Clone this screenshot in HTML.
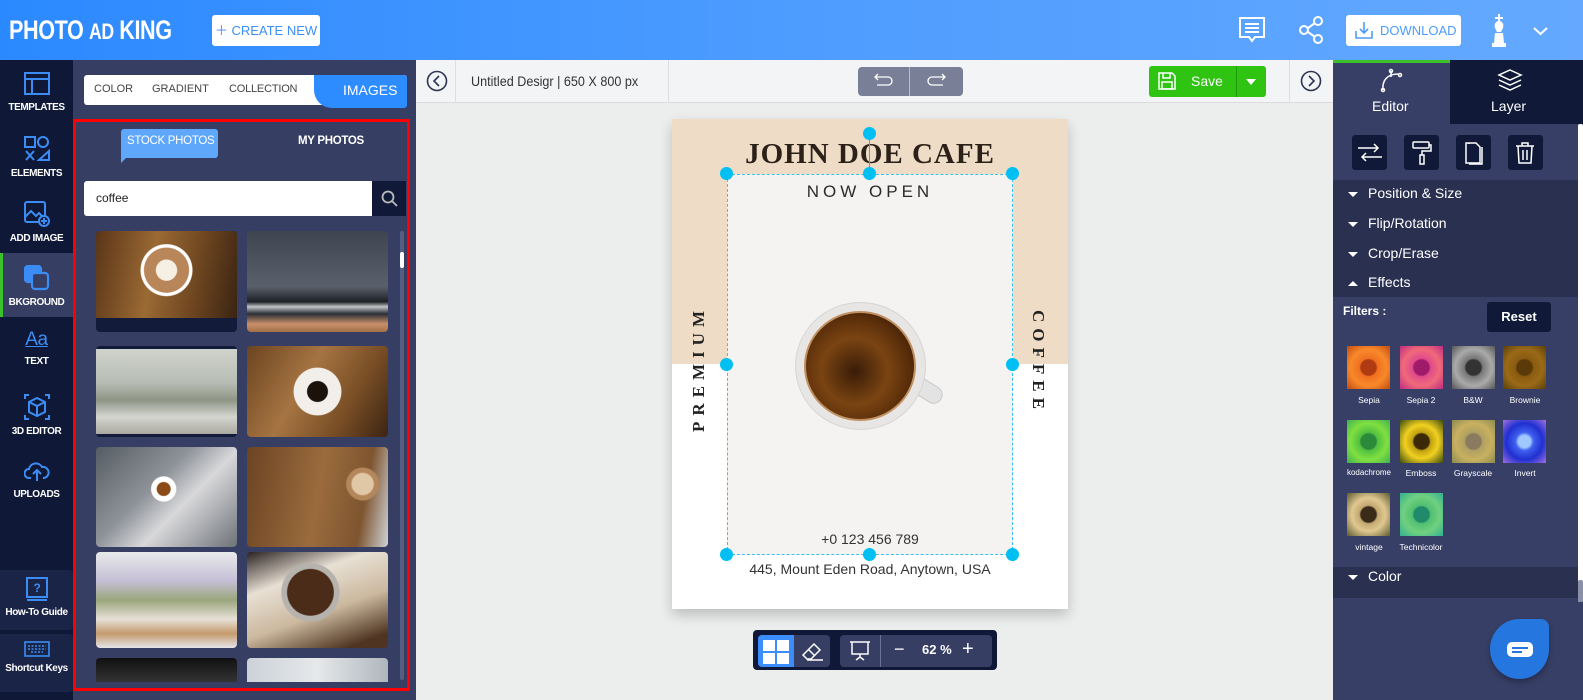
<!DOCTYPE html>
<html><head><meta charset="utf-8"><style>
*{box-sizing:border-box;margin:0;padding:0}
body{width:1583px;height:700px;overflow:hidden;font-family:"Liberation Sans",sans-serif;background:#eceeee;position:relative}
.abs{position:absolute}
#hdr{left:0;top:0;width:1583px;height:60px;background:linear-gradient(90deg,#2b89ff,#4d9cff 50%,#64a9ff)}
#nav{left:0;top:60px;width:73px;height:640px;background:#0f1937}
.ni{position:absolute;left:0;width:73px;text-align:center;color:#fff;font-size:10px;font-weight:bold;letter-spacing:-0.4px}
.ni svg{display:block;margin:0 auto 6px}
#panel{left:73px;top:60px;width:343px;height:640px;background:#363e63}
#red{left:73px;top:119px;width:337px;height:572px;border:3px solid #f00}
.th{position:absolute;width:141px;border-radius:4px}
#center{left:416px;top:60px;width:917px;height:640px;background:#eceeee}
#tb{left:416px;top:60px;width:917px;height:43px;background:#f2f4f5;border-bottom:1px solid #dcdcdc}
#right{left:1333px;top:60px;width:250px;height:640px;background:#373f66}
.acc{position:absolute;left:1348px;color:#fff;font-size:14px}
.acc:before{content:"";display:inline-block;border-left:5px solid transparent;border-right:5px solid transparent;border-top:5px solid #fff;margin-right:10px;vertical-align:middle}
.acc.up:before{border-top:0;border-bottom:5px solid #fff}
.fl{position:absolute;width:43px;height:43px}
.fll{position:absolute;width:60px;text-align:center;color:#fff;font-size:8.5px}
.h{position:absolute;width:13px;height:13px;border-radius:50%;background:#00bff3}
</style></head><body>
<div id="hdr" class="abs"></div>
<div class="abs" style="left:9px;top:15px;color:#fff;font-size:27px;font-weight:bold;letter-spacing:-0.5px;white-space:nowrap;transform:scaleX(0.8);transform-origin:0 0">PHOTO <span style="font-size:22px">AD</span> KING</div>
<div class="abs" style="left:212px;top:15px;width:108px;height:31px;background:#fff;border-radius:3px;color:#3e8ff5;font-size:13px;line-height:31px;text-align:center">＋ CREATE NEW</div>
<svg class="abs" style="left:1238px;top:16px" width="28" height="28" viewBox="0 0 28 28" fill="none" stroke="#fff" stroke-width="2"><path d="M2 2h24v19H17l-3 4-3-4H2z"/><path d="M7 8h14M7 12h14M7 16h14"/></svg>
<svg class="abs" style="left:1298px;top:16px" width="28" height="28" viewBox="0 0 28 28" fill="none" stroke="#fff" stroke-width="2"><circle cx="20" cy="5" r="4"/><circle cx="6" cy="14" r="4"/><circle cx="20" cy="23" r="4"/><path d="M10 12l7-5M10 16l7 5"/></svg>
<div class="abs" style="left:1346px;top:15px;width:115px;height:31px;background:#fff;border-radius:3px;color:#4d9cfb;font-size:13px;line-height:31px;padding-left:34px">DOWNLOAD</div>
<svg class="abs" style="left:1354px;top:20px" width="20" height="20" viewBox="0 0 20 20" fill="none" stroke="#4d9cfb" stroke-width="1.6"><path d="M2 11v7h16v-7M10 2v11M6 9l4 4 4-4"/></svg>
<svg class="abs" style="left:1490px;top:14px" width="18" height="34" viewBox="0 0 18 34" fill="#fff"><path d="M8 0h2v3h3v2h-3v2c3 1 4 4 3 7l-2 4h-4l-2-4c-1-3 0-6 3-7V5H5V3h3z"/><path d="M5 19h8l1 10h-10z"/><rect x="2" y="29" width="14" height="4"/></svg>
<svg class="abs" style="left:1533px;top:26px" width="15" height="10" viewBox="0 0 15 10" fill="none" stroke="#fff" stroke-width="2"><path d="M1 2l6.5 6 6.5-6"/></svg>

<div id="nav" class="abs"></div>
<div class="ni" style="top:72px"><svg width="26" height="24" viewBox="0 0 26 24" fill="none" stroke="#3b8df5" stroke-width="2"><rect x="1" y="1" width="24" height="21"/><path d="M1 7h24M8 7v15"/></svg>TEMPLATES</div>
<div class="ni" style="top:136px"><svg width="26" height="26" viewBox="0 0 26 26" fill="none" stroke="#3b8df5" stroke-width="2"><rect x="1" y="1" width="10" height="10"/><circle cx="19" cy="6" r="5"/><path d="M2 15l8 9M10 15l-8 9M15 24h10V15z"/></svg>ELEMENTS</div>
<div class="ni" style="top:201px"><svg width="26" height="26" viewBox="0 0 26 26" fill="none" stroke="#3b8df5" stroke-width="2"><rect x="1" y="1" width="20" height="20" rx="2"/><path d="M1 16l6-6 5 5 3-3 6 6"/><circle cx="20" cy="20" r="5" fill="#0f1937"/><path d="M20 17v6M17 20h6"/></svg>ADD IMAGE</div>
<div class="abs" style="left:0;top:253px;width:73px;height:64px;background:#363e63;border-left:3px solid #3ac12b"></div>
<div class="ni" style="top:265px"><svg width="26" height="26" viewBox="0 0 26 26" fill="none" stroke="#3b8df5" stroke-width="2.2"><rect x="1" y="1" width="16" height="16" rx="3" fill="#3b8df5"/><rect x="8" y="8" width="16" height="16" rx="3" fill="#363e63"/></svg>BKGROUND</div>
<div class="ni" style="top:330px"><div style="color:#3b8df5;font-size:19px;font-weight:normal;line-height:20px;text-decoration:underline">Aa</div><div style="height:6px"></div>TEXT</div>
<div class="ni" style="top:394px"><svg width="26" height="26" viewBox="0 0 26 26" fill="none" stroke="#3b8df5" stroke-width="2"><path d="M13 4l8 4v10l-8 4-8-4V8zM5 8l8 4 8-4M13 12v10"/><path d="M1 5V1h4M21 1h4v4M25 21v4h-4M5 25H1v-4"/></svg>3D EDITOR</div>
<div class="ni" style="top:459px"><svg width="26" height="24" viewBox="0 0 26 24" fill="none" stroke="#3b8df5" stroke-width="2"><path d="M7 19H5a4 4 0 010-9 7 7 0 0113-2 5 5 0 012 11h-1"/><path d="M13 22v-10M9 15l4-4 4 4"/></svg>UPLOADS</div>
<div class="abs" style="left:0;top:570px;width:73px;height:60px;background:#1a2447;border-radius:0 4px 4px 0"></div>
<div class="ni" style="top:577px"><svg width="22" height="24" viewBox="0 0 22 24" fill="none" stroke="#3b8df5" stroke-width="2"><rect x="1" y="1" width="20" height="19"/><path d="M1 23h20"/><text x="11" y="15" font-size="12" fill="#3b8df5" stroke="none" text-anchor="middle" font-family="Liberation Sans">?</text></svg>How-To Guide</div>
<div class="abs" style="left:0;top:634px;width:73px;height:58px;background:#1a2447;border-radius:0 4px 4px 0"></div>
<div class="ni" style="top:641px"><svg width="26" height="16" viewBox="0 0 26 16" fill="none" stroke="#3b8df5" stroke-width="1.6"><rect x="1" y="1" width="24" height="14"/><path d="M4 5h18M4 8h18M7 11h12" stroke-dasharray="2 1.5"/></svg>Shortcut Keys</div>

<div id="panel" class="abs"></div>
<div class="abs" style="left:84px;top:75px;width:323px;height:30px;background:#fff;border-radius:3px"></div>
<div class="abs" style="left:314px;top:75px;width:93px;height:33px;background:#2d8cff;border-radius:0 3px 3px 18px"></div>
<div class="abs" style="left:94px;top:83px;font-size:11px;color:#444">COLOR</div>
<div class="abs" style="left:152px;top:83px;font-size:11px;color:#444">GRADIENT</div>
<div class="abs" style="left:229px;top:83px;font-size:11px;color:#444;letter-spacing:-0.2px">COLLECTION</div>
<div class="abs" style="left:343px;top:82px;font-size:14px;color:#fff">IMAGES</div>
<div id="red" class="abs"></div>
<div class="abs" style="left:121px;top:129px;width:97px;height:29px;background:#5ea7fb;border-radius:3px"></div>
<div class="abs" style="left:121px;top:155px;border-top:8px solid #5ea7fb;border-right:8px solid transparent"></div>
<div class="abs" style="left:127px;top:135px;font-size:11.5px;color:#fff;letter-spacing:-0.3px">STOCK PHOTOS</div>
<div class="abs" style="left:298px;top:135px;font-size:11.5px;color:#fff;font-weight:bold;letter-spacing:-0.3px">MY PHOTOS</div>
<div class="abs" style="left:84px;top:181px;width:288px;height:35px;background:#fff;border-radius:3px 0 0 3px;font-size:12px;line-height:35px;padding-left:12px;color:#222">coffee</div>
<div class="abs" style="left:372px;top:181px;width:34px;height:35px;background:#101a38"></div>
<svg class="abs" style="left:381px;top:190px" width="17" height="17" viewBox="0 0 17 17" fill="none" stroke="#bbb" stroke-width="1.8"><circle cx="7" cy="7" r="5.5"/><path d="M11 11l5 5"/></svg>
<div class="th" style="left:96px;top:231px;height:101px;background:#121b3a"><div style="height:87px;border-radius:4px 4px 0 0;background:radial-gradient(circle at 50% 45%,#f6f0e4 0 12%,#b9865a 13% 26%,#fff 27% 30%,transparent 31%),linear-gradient(100deg,#5a3518,#9b6a34 40%,#6e4620 70%,#3a2412)"></div></div>
<div class="th" style="left:247px;top:231px;height:101px;background:linear-gradient(180deg,#3e4550,#59606b 55%,#1d2026 70%,#bfc3c6 75%,#2a2e36 82%,#c8906a 92%,#a3704a)"></div>
<div class="th" style="left:96px;top:346px;height:91px;background:#121b3a"><div style="height:85px;margin-top:3px;background:linear-gradient(180deg,#cfd3cc,#b7bcb4 40%,#8e9585 60%,#d4d5d0 80%,#aaa9a0)"></div></div>
<div class="th" style="left:247px;top:346px;height:91px;background:radial-gradient(circle at 50% 50%,#1b120c 0 12%,#f2efea 13% 28%,transparent 29%),linear-gradient(120deg,#6b4420,#a67442 40%,#7a4f26 70%,#3b2412)"></div>
<div class="th" style="left:96px;top:447px;height:100px;background:radial-gradient(circle at 48% 42%,#8b4a17 0 7%,#fff 8% 13%,transparent 14%),linear-gradient(135deg,#555c63,#8e9399 40%,#d8d8da 60%,#6d7278)"></div>
<div class="th" style="left:247px;top:447px;height:100px;background:radial-gradient(circle at 82% 37%,#e0c7a6 0 8%,#b4875b 9% 12%,transparent 13%),linear-gradient(100deg,#6b4423,#9b6b3d 50%,#7e5530 80%,#cfd2d5)"></div>
<div class="th" style="left:96px;top:552px;height:96px;background:linear-gradient(180deg,#e8eaeb,#c5bfd6 30%,#9aa67c 50%,#e6e0d6 70%,#c49a6c 85%,#e4e6ea)"></div>
<div class="th" style="left:247px;top:552px;height:96px;background:radial-gradient(circle at 45% 42%,#4a2c18 0 24%,#b6b3ae 25% 30%,transparent 31%),linear-gradient(160deg,#2a2220,#e8e0d4 30%,#cbb89e 60%,#4e3421 90%)"></div>
<div class="th" style="left:96px;top:658px;height:24px;background:linear-gradient(180deg,#111,#333);border-radius:4px 4px 0 0"></div>
<div class="th" style="left:247px;top:658px;height:24px;background:linear-gradient(90deg,#ccd2d8,#e6e8ea,#aeb6bd);border-radius:4px 4px 0 0"></div>
<div class="abs" style="left:400px;top:231px;width:4px;height:449px;background:#545d82;border-radius:2px"></div>
<div class="abs" style="left:400px;top:252px;width:4px;height:16px;background:#fff;border-radius:2px"></div>

<div id="center" class="abs"></div>
<div id="tb" class="abs"></div>
<div class="abs" style="left:455px;top:60px;width:1px;height:43px;background:#dcdfe0"></div>
<div class="abs" style="left:668px;top:60px;width:1px;height:43px;background:#dcdfe0"></div>
<div class="abs" style="left:1289px;top:60px;width:1px;height:43px;background:#dcdfe0"></div>
<svg class="abs" style="left:426px;top:70px" width="22" height="22" viewBox="0 0 22 22" fill="none" stroke="#2c3452" stroke-width="1.6"><circle cx="11" cy="11" r="9.5"/><path d="M13 6l-5 5 5 5"/></svg>
<svg class="abs" style="left:1300px;top:70px" width="22" height="22" viewBox="0 0 22 22" fill="none" stroke="#2c3452" stroke-width="1.6"><circle cx="11" cy="11" r="9.5"/><path d="M9 6l5 5-5 5"/></svg>
<div class="abs" style="left:471px;top:73px;font-size:14px;color:#333;transform:scaleX(0.9);transform-origin:0 0;white-space:nowrap">Untitled Desigr | 650 X 800 px</div>
<div class="abs" style="left:858px;top:67px;width:105px;height:29px;background:#787f97;border-radius:4px"></div>
<div class="abs" style="left:909px;top:67px;width:1px;height:29px;background:#b9bdc8"></div>
<svg class="abs" style="left:873px;top:72px" width="22" height="18" viewBox="0 0 22 18" fill="none" stroke="#fff" stroke-width="1.3"><path d="M5 2L2 5l3 3M2 5h13a4 4 0 010 8H4"/></svg>
<svg class="abs" style="left:925px;top:72px" width="22" height="18" viewBox="0 0 22 18" fill="none" stroke="#fff" stroke-width="1.3"><path d="M17 2l3 3-3 3M20 5H7a4 4 0 000 8h11"/></svg>
<div class="abs" style="left:1149px;top:66px;width:117px;height:31px;background:#2ec411;border-radius:3px"></div>
<div class="abs" style="left:1236px;top:66px;width:1px;height:31px;background:#1f9a08"></div>
<svg class="abs" style="left:1157px;top:71px" width="20" height="20" viewBox="0 0 20 20" fill="none" stroke="#fff" stroke-width="1.5"><path d="M2 2h13l3 3v13H2z"/><path d="M6 2v5h7V2M5 11h10v7H5z"/></svg>
<div class="abs" style="left:1191px;top:73px;font-size:14px;color:#fff">Save</div>
<div class="abs" style="left:1246px;top:79px;border-left:5px solid transparent;border-right:5px solid transparent;border-top:6px solid #fff"></div>

<div class="abs" style="left:672px;top:119px;width:396px;height:490px;background:#fff;box-shadow:0 6px 12px rgba(0,0,0,.2)"></div>
<div class="abs" style="left:672px;top:119px;width:396px;height:245px;background:#eedcc7"></div>
<div class="abs" style="left:727px;top:174px;width:286px;height:381px;background:#f4f3f1;border:1px dashed #38c3ef"></div>
<div class="abs" style="left:672px;top:138px;width:396px;text-align:center;font-family:'Liberation Serif',serif;font-weight:bold;font-size:29px;color:#2b2118;letter-spacing:1px">JOHN DOE CAFE</div>
<div class="abs" style="left:672px;top:182px;width:396px;text-align:center;font-size:17px;color:#2b2b2b;letter-spacing:4px">NOW OPEN</div>
<div class="abs" style="left:689px;top:432px;transform:rotate(-90deg);transform-origin:0 0;font-family:'Liberation Serif',serif;font-weight:bold;font-size:17px;letter-spacing:6px;color:#222;white-space:nowrap">PREMIUM</div>
<div class="abs" style="left:1048px;top:310px;transform:rotate(90deg);transform-origin:0 0;font-family:'Liberation Serif',serif;font-weight:bold;font-size:17px;letter-spacing:6px;color:#222;white-space:nowrap">COFFEE</div>
<div class="abs" style="left:672px;top:531px;width:396px;text-align:center;font-size:14px;color:#333">+0 123 456 789</div>
<div class="abs" style="left:672px;top:561px;width:396px;text-align:center;font-size:14px;color:#333">445, Mount Eden Road, Anytown, USA</div>
<div class="abs" style="left:908px;top:381px;width:36px;height:18px;background:#e3e3e3;border-radius:9px;transform:rotate(32deg);border:1px solid #c8c8c8"></div>
<div class="abs" style="left:795px;top:302px;width:131px;height:128px;border-radius:50%;background:#e7e6e4;border:1px solid #d5d5d5"></div>
<div class="abs" style="left:804px;top:311px;width:112px;height:110px;border-radius:50%;background:radial-gradient(circle at 45% 55%,#3a1c08,#7a4412 40%,#5a2e0a 65%,#2a1405 90%);border:2px solid #c09060"></div>
<div class="abs" style="left:869px;top:129px;width:1px;height:45px;background:#00bff3"></div>
<div class="h" style="left:863px;top:127px"></div>
<div class="h" style="left:720px;top:167px"></div><div class="h" style="left:863px;top:167px"></div><div class="h" style="left:1006px;top:167px"></div>
<div class="h" style="left:720px;top:358px"></div><div class="h" style="left:1006px;top:358px"></div>
<div class="h" style="left:720px;top:548px"></div><div class="h" style="left:863px;top:548px"></div><div class="h" style="left:1006px;top:548px"></div>

<div class="abs" style="left:753px;top:630px;width:244px;height:40px;background:#0f1937;border-radius:4px"></div>
<div class="abs" style="left:758px;top:635px;width:72px;height:32px;background:#363e63;border-radius:4px"></div>
<div class="abs" style="left:758px;top:635px;width:36px;height:32px;background:#3c8dfc;border-radius:4px 0 0 4px"></div>
<svg class="abs" style="left:763px;top:640px" width="26" height="24" viewBox="0 0 26 24" fill="#fff"><rect x="0" y="0" width="12" height="11"/><rect x="14" y="0" width="12" height="11"/><rect x="0" y="13" width="12" height="11"/><rect x="14" y="13" width="12" height="11"/></svg>
<svg class="abs" style="left:798px;top:639px" width="28" height="24" viewBox="0 0 28 24" fill="none" stroke="#fff" stroke-width="1.5"><path d="M5 16l11-11 6 6-9 9H9zM10 10l6 6M9 21h16"/></svg>
<div class="abs" style="left:840px;top:635px;width:152px;height:32px;background:#363e63;border-radius:4px"></div>
<div class="abs" style="left:880px;top:635px;width:1px;height:32px;background:#6a7194"></div>
<svg class="abs" style="left:848px;top:640px" width="24" height="22" viewBox="0 0 24 22" fill="none" stroke="#fff" stroke-width="1.5"><path d="M2 2h20M4 2v12h16V2M12 14v4M8 20l4-3 4 3"/></svg>
<div class="abs" style="left:894px;top:639px;font-size:18px;color:#fff">−</div>
<div class="abs" style="left:922px;top:642px;font-size:13px;color:#fff;font-weight:bold">62 %</div>
<div class="abs" style="left:962px;top:638px;font-size:20px;color:#fff">+</div>

<div id="right" class="abs"></div>
<div class="abs" style="left:1333px;top:60px;width:117px;height:3px;background:#3ac12b"></div>
<div class="abs" style="left:1450px;top:60px;width:133px;height:64px;background:#101a38"></div>
<svg class="abs" style="left:1378px;top:68px" width="26" height="26" viewBox="0 0 26 26" fill="none" stroke="#fff" stroke-width="1.5"><path d="M5 22C4 14 8 6 20 6M13 3v6"/><circle cx="13" cy="3" r="1.5"/><circle cx="22" cy="7" r="1.5"/><circle cx="5" cy="22" r="1.5"/></svg>
<div class="abs" style="left:1372px;top:98px;font-size:14px;color:#fff">Editor</div>
<svg class="abs" style="left:1497px;top:68px" width="26" height="24" viewBox="0 0 26 24" fill="none" stroke="#fff" stroke-width="1.5"><path d="M13 2l11 5-11 5L2 7zM2 12l11 5 11-5M2 17l11 5 11-5"/></svg>
<div class="abs" style="left:1491px;top:98px;font-size:14px;color:#fff">Layer</div>
<div class="abs" style="left:1352px;top:135px;width:35px;height:35px;background:#101a38;border-radius:3px"></div>
<div class="abs" style="left:1404px;top:135px;width:35px;height:35px;background:#101a38;border-radius:3px"></div>
<div class="abs" style="left:1456px;top:135px;width:35px;height:35px;background:#101a38;border-radius:3px"></div>
<div class="abs" style="left:1508px;top:135px;width:35px;height:35px;background:#101a38;border-radius:3px"></div>
<svg class="abs" style="left:1356px;top:142px" width="28" height="22" viewBox="0 0 28 22" fill="none" stroke="#fff" stroke-width="1.5"><path d="M2 6h20M18 2l4 4-4 4M26 15H6M10 11l-4 4 4 4"/></svg>
<svg class="abs" style="left:1411px;top:140px" width="22" height="26" viewBox="0 0 22 26" fill="none" stroke="#fff" stroke-width="1.5"><rect x="2" y="2" width="16" height="6" rx="1"/><path d="M18 5h2v6h-9v4"/><rect x="9" y="15" width="4" height="9"/></svg>
<svg class="abs" style="left:1464px;top:141px" width="20" height="24" viewBox="0 0 20 24" fill="none" stroke="#fff" stroke-width="1.5"><path d="M2 2h10l4 4v16H2z"/><path d="M5 2v1M18 6v17H5"/></svg>
<svg class="abs" style="left:1515px;top:141px" width="20" height="24" viewBox="0 0 20 24" fill="none" stroke="#fff" stroke-width="1.5"><path d="M1 5h18M7 5V2h6v3M3 5l1 17h12l1-17M8 9v10M12 9v10"/></svg>
<div class="abs" style="left:1333px;top:180px;width:245px;height:117px;background:#2a3150"></div>
<div class="acc" style="top:185px">Position &amp; Size</div>
<div class="acc" style="top:215px">Flip/Rotation</div>
<div class="acc" style="top:245px">Crop/Erase</div>
<div class="acc up" style="top:274px">Effects</div>
<div class="abs" style="left:1343px;top:304px;font-size:12px;color:#fff;font-weight:bold">Filters :</div>
<div class="abs" style="left:1487px;top:302px;width:64px;height:30px;background:#101a38;border-radius:3px;color:#fff;font-size:13px;font-weight:bold;line-height:30px;text-align:center">Reset</div>
<div class="fl" style="left:1347px;top:346px;background:radial-gradient(circle,#b03a12 0 25%,#f07020 30%,#f8892a 60%,#c04a10)"></div>
<div class="fl" style="left:1400px;top:346px;background:radial-gradient(circle,#a01a6a 0 25%,#e04a8a 30%,#f06a7a 60%,#c02a80)"></div>
<div class="fl" style="left:1452px;top:346px;background:radial-gradient(circle,#333 0 25%,#777 30%,#aaa 60%,#555)"></div>
<div class="fl" style="left:1503px;top:346px;background:radial-gradient(circle,#5a3a08 0 25%,#8a5a10 30%,#9a6a18 60%,#5a4008)"></div>
<div class="fl" style="left:1347px;top:420px;background:radial-gradient(circle,#2a8a3a 0 25%,#50c040 30%,#80e040 60%,#40b050)"></div>
<div class="fl" style="left:1400px;top:420px;background:radial-gradient(circle,#3a2a08 0 25%,#c0a010 30%,#f0d020 55%,#3a4a10)"></div>
<div class="fl" style="left:1452px;top:420px;background:radial-gradient(circle,#8a7a60 0 25%,#b0a060 30%,#c8b060 60%,#8a8a50)"></div>
<div class="fl" style="left:1503px;top:420px;background:radial-gradient(circle,#a0c8ff 0 20%,#4060f0 30%,#2030d0 60%,#a070e0)"></div>
<div class="fl" style="left:1347px;top:493px;background:radial-gradient(circle,#3a2a18 0 25%,#c0a870 30%,#e0c890 55%,#5a5a30)"></div>
<div class="fl" style="left:1400px;top:493px;background:radial-gradient(circle,#208a6a 0 25%,#50c070 30%,#70d080 60%,#30b090)"></div>
<div class="fll" style="left:1339px;top:395px">Sepia</div><div class="fll" style="left:1391px;top:395px">Sepia 2</div><div class="fll" style="left:1443px;top:395px">B&amp;W</div><div class="fll" style="left:1495px;top:395px">Brownie</div>
<div class="fll" style="left:1339px;top:468px;font-size:8px">kodachrome</div><div class="fll" style="left:1391px;top:468px">Emboss</div><div class="fll" style="left:1443px;top:468px">Grayscale</div><div class="fll" style="left:1495px;top:468px">Invert</div>
<div class="fll" style="left:1339px;top:542px">vintage</div><div class="fll" style="left:1391px;top:542px">Technicolor</div>
<div class="abs" style="left:1333px;top:567px;width:245px;height:31px;background:#2a3150"></div>
<div class="acc" style="top:568px">Color</div>
<div class="abs" style="left:1578px;top:124px;width:5px;height:478px;background:#fff;border-radius:2px"></div>
<div class="abs" style="left:1578px;top:580px;width:5px;height:22px;background:#8a90a8;border-radius:2px"></div>
<div class="abs" style="left:1490px;top:619px;width:59px;height:60px;background:#2576df;border-radius:50% 8px 50% 50%;box-shadow:0 3px 6px rgba(0,0,0,.3)"></div>
<div class="abs" style="left:1507px;top:642px;width:26px;height:15px;background:#fff;border-radius:5px"></div>
<div class="abs" style="left:1512px;top:647px;width:16px;height:2px;background:#2576df"></div>
<div class="abs" style="left:1512px;top:651px;width:10px;height:2px;background:#2576df"></div>
</body></html>
